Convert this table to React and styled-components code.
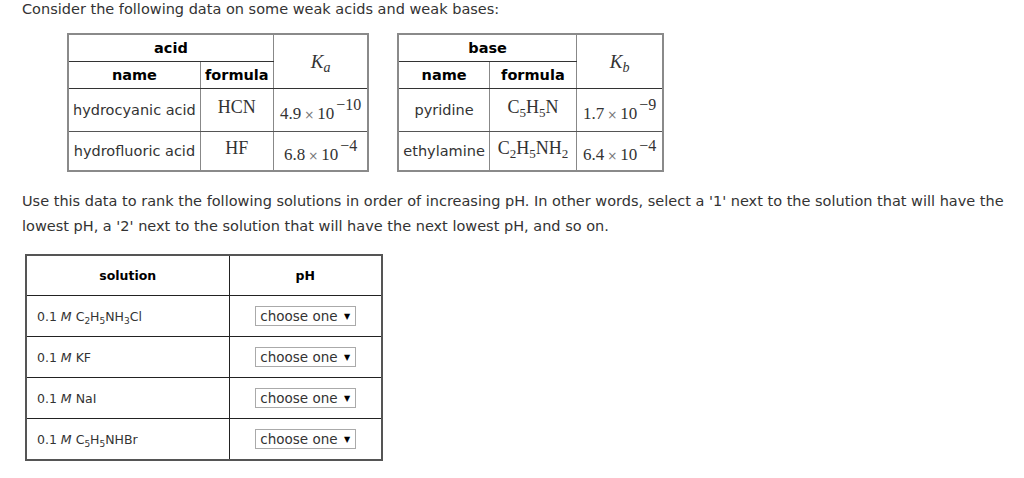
import React from "react";
import styled, { createGlobalStyle } from "styled-components";

const GlobalStyle = createGlobalStyle`
  body {
    margin: 0;
    background: #fff;
    font-family: "DejaVu Sans", Verdana, sans-serif;
    color: #333;
  }
`;

const acids = [
  { name: "hydrocyanic acid", formula: <>HCN</>, mant: "4.9", exp: "−10" },
  { name: "hydrofluoric acid", formula: <>HF</>, mant: "6.8", exp: "−4" },
];

const bases = [
  { name: "pyridine", formula: <>C<sub>5</sub>H<sub>5</sub>N</>, mant: "1.7", exp: "−9" },
  { name: "ethylamine", formula: <>C<sub>2</sub>H<sub>5</sub>NH<sub>2</sub></>, mant: "6.4", exp: "−4" },
];

const solutions = [
  <>C<sub>2</sub>H<sub>5</sub>NH<sub>3</sub>Cl</>,
  <>KF</>,
  <>NaI</>,
  <>C<sub>5</sub>H<sub>5</sub>NHBr</>,
];

function Constant({ letter, sub }) {
  return (
    <KSymbol>
      {letter}
      <sub>{sub}</sub>
    </KSymbol>
  );
}

function Sci({ mant, exp }) {
  return (
    <SciValue>
      {mant}
      <Times>×</Times>
      10
      <sup>{exp}</sup>
    </SciValue>
  );
}

function DataTable({ title, widths, letter, sub, rows }) {
  return (
    <Table>
      <colgroup>
        {widths.map((w, i) => (
          <col key={i} style={{ width: w }} />
        ))}
      </colgroup>
      <tbody>
        <tr>
          <Th colSpan={2} $h={26}>{title}</Th>
          <Th rowSpan={2}>
            <Constant letter={letter} sub={sub} />
          </Th>
        </tr>
        <tr>
          <Th $h={26}>name</Th>
          <Th>formula</Th>
        </tr>
        {rows.map((r, i) => (
          <tr key={r.name}>
            <NameCell $h={i === 0 ? 42 : 38}>{r.name}</NameCell>
            <FormulaCell>{r.formula}</FormulaCell>
            <ValueCell>
              <Sci mant={r.mant} exp={r.exp} />
            </ValueCell>
          </tr>
        ))}
      </tbody>
    </Table>
  );
}

export default function App() {
  return (
    <>
      <GlobalStyle />
      <Page>
        <Lead>Consider the following data on some weak acids and weak bases:</Lead>
        <TablesRow>
          <DataTable title="acid" widths={[129, 73, 95]} letter="K" sub="a" rows={acids} />
          <DataTable title="base" widths={[90, 87, 87]} letter="K" sub="b" rows={bases} />
        </TablesRow>
        <Instructions>
          Use this data to rank the following solutions in order of increasing pH. In other words, select a '1' next to the solution that will have the
          lowest pH, a '2' next to the solution that will have the next lowest pH, and so on.
        </Instructions>
        <RankTable>
          <colgroup>
            <col style={{ width: 203 }} />
            <col style={{ width: 153 }} />
          </colgroup>
          <tbody>
            <tr>
              <RankHead>solution</RankHead>
              <RankHead>pH</RankHead>
            </tr>
            {solutions.map((s, i) => (
              <tr key={i}>
                <SolutionCell>
                  0.1 <Molar>M</Molar> {s}
                </SolutionCell>
                <SelectCell>
                  <Choose>
                    choose one <Arrow>▼</Arrow>
                  </Choose>
                </SelectCell>
              </tr>
            ))}
          </tbody>
        </RankTable>
      </Page>
    </>
  );
}

const Page = styled.div`
  padding: 0 0 0 22px;
`;

const Lead = styled.p`
  margin: 0;
  font-size: 14.5px;
  line-height: 18px;
  color: #333;
`;

const TablesRow = styled.div`
  display: flex;
  align-items: flex-start;
  gap: 28px;
  margin: 15px 0 0 45px;
`;

const Table = styled.table`
  border-collapse: collapse;
  border: 2px solid #8a8a8a;
  table-layout: fixed;
`;

const Th = styled.th`
  border: 1px solid #333;
  border-left-color: #888;
  border-right-color: #888;
  height: ${(p) => (p.$h ? `${p.$h}px` : "auto")};
  padding: 0 4px;
  font-size: 14.5px;
  font-weight: bold;
  color: #000;
  text-align: center;
  vertical-align: middle;
`;

const Td = styled.td`
  border: 1px solid #555;
  border-left-color: #888;
  border-right-color: #888;
  padding: 0 4px;
  text-align: center;
  vertical-align: middle;
  white-space: nowrap;
`;

const NameCell = styled(Td)`
  height: ${(p) => p.$h}px;
  font-size: 14.5px;
  color: #333;
`;

const FormulaCell = styled(Td)`
  font-family: "Liberation Serif", "Times New Roman", serif;
  font-size: 18px;
  color: #333;
  padding-bottom: 6px;

  sub {
    font-size: 13px;
    line-height: 0;
    vertical-align: -4px;
  }
`;

const ValueCell = styled(Td)`
  padding-top: 7px;
`;

const KSymbol = styled.span`
  font-family: "Liberation Serif", "Times New Roman", serif;
  font-style: italic;
  font-weight: normal;
  font-size: 19px;
  color: #333;

  sub {
    font-size: 14px;
    line-height: 0;
    vertical-align: -4px;
  }
`;

const SciValue = styled.span`
  font-family: "Liberation Serif", "Times New Roman", serif;
  font-size: 17px;
  color: #333;

  sup {
    font-size: 16px;
    line-height: 0;
    vertical-align: 9px;
    margin-left: 2px;
  }
`;

const Times = styled.span`
  font-family: "DejaVu Sans", sans-serif;
  font-size: 12px;
  color: #777;
  margin: 0 3px;
`;

const Instructions = styled.p`
  margin: 17px 0 0;
  font-size: 14.5px;
  line-height: 25px;
  color: #333;
`;

const RankTable = styled.table`
  border-collapse: collapse;
  border: 2px solid #555;
  table-layout: fixed;
  margin: 15px 0 0 3px;
`;

const RankHead = styled.th`
  border: 1px solid #222;
  height: 37px;
  font-size: 12.5px;
  font-weight: bold;
  color: #000;
  text-align: center;
`;

const SolutionCell = styled.td`
  border: 1px solid #222;
  height: 40px;
  padding: 0 0 0 10px;
  font-size: 12.5px;
  color: #333;

  sub {
    font-size: 9px;
    line-height: 0;
    vertical-align: -3px;
  }
`;

const Molar = styled.i`
  font-style: italic;
`;

const SelectCell = styled.td`
  border: 1px solid #222;
  text-align: center;
  vertical-align: middle;
  padding-left: 2px;
`;

const Choose = styled.span`
  display: inline-flex;
  align-items: center;
  justify-content: space-between;
  box-sizing: border-box;
  width: 101px;
  height: 20px;
  padding: 0 5px 0 4px;
  border: 1px solid #aaa;
  background: #fff;
  font-size: 13.5px;
  color: #333;
`;

const Arrow = styled.span`
  font-size: 8px;
  color: #000;
`;
